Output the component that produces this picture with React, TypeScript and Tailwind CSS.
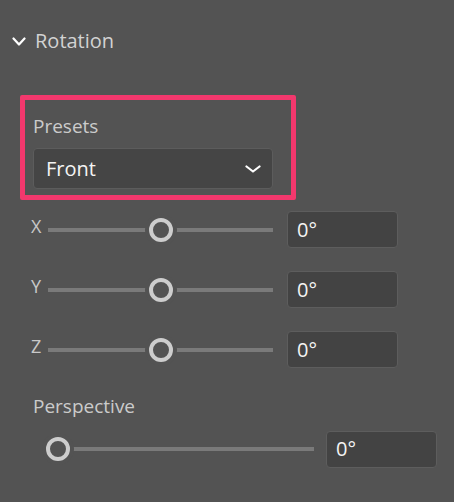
import React from "react";

function Chevron({ w, h, cls }: { w: number; h: number; cls?: string }) {
  return (
    <svg width={w} height={h} viewBox={`0 0 ${w} ${h}`} className={cls} fill="none">
      <path
        d={`M1.5 1.5 L${w / 2} ${h - 1.5} L${w - 1.5} 1.5`}
        stroke="currentColor"
        strokeWidth={2.2}
        strokeLinecap="round"
        strokeLinejoin="round"
      />
    </svg>
  );
}

function Slider({ pct, width }: { pct: number; width: number }) {
  return (
    <div className="relative flex h-[26px] items-center" style={{ width }}>
      <div className="h-[4px] w-full bg-[#7a7a7a]" />
      <div
        className="absolute top-[1px] h-6 w-6 -translate-x-1/2 rounded-full border-4 border-[#cdcdcd] bg-[#535353] ring-4 ring-[#535353]"
        style={{ left: `${pct}%` }}
      />
    </div>
  );
}

function ValueBox({ value }: { value: string }) {
  return (
    <div className="flex h-[37px] w-[111px] items-center rounded-[4px] border border-[#5d5d5d] bg-[#434343] pl-[9px] text-[20px] text-[#f4f4f4]">
      {value}
    </div>
  );
}

const AXES = ["X", "Y", "Z"];

export default function App() {
  return (
    <div className="h-[502px] w-[454px] overflow-hidden bg-[#535353] font-['Open_Sans',sans-serif]">
      {/* Section header */}
      <div className="mt-[28px] flex h-[26px] items-center gap-[9px] pl-[12px] text-[#d2d2d2]">
        <Chevron w={14} h={9} cls="text-white" />
        <span className="text-[20px] leading-none">Rotation</span>
      </div>

      {/* Presets */}
      <div className="ml-[20px] mt-[41px] h-[105px] w-[276px] rounded-[2px] border-[5px] border-[#f2386d] pl-[8px] pt-[14px]">
        <div className="text-[19px] leading-[24px] text-[#cbcbcb]">Presets</div>
        <div className="mt-[10px] flex h-[41px] w-[240px] items-center justify-between rounded-[4px] border border-[#5c5c5c] bg-[#454545] pl-[12px] pr-[11px]">
          <span className="text-[20px] font-medium text-[#f4f4f4]">Front</span>
          <Chevron w={16} h={8} cls="text-white" />
        </div>
      </div>

      {/* Axis sliders */}
      <div className="mt-[11px] flex flex-col gap-[23px] pl-[31px]">
        {AXES.map((a) => (
          <div key={a} className="flex h-[37px] items-center">
            <span className="w-[17px] -translate-y-[4px] text-[18px] leading-none text-[#c8c8c8]">{a}</span>
            <Slider pct={50} width={225} />
            <div className="ml-[14px]">
              <ValueBox value="0°" />
            </div>
          </div>
        ))}
      </div>

      {/* Perspective */}
      <div className="mt-[26px] pl-[33px] text-[19px] leading-[24px] text-[#cbcbcb]">Perspective</div>
      <div className="mt-[12px] flex h-[38px] items-center pl-[46px]">
        <div className="pl-[12px]">
          <Slider pct={0} width={256} />
        </div>
        <div className="ml-[12px]">
          <ValueBox value="0°" />
        </div>
      </div>
    </div>
  );
}
